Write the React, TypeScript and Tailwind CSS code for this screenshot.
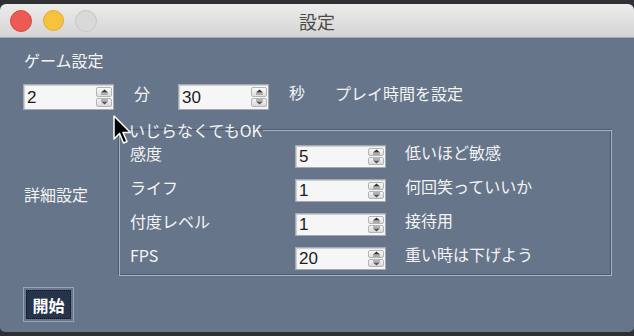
import React from "react";

const jp = { fontFamily: '"Noto Sans CJK JP", "Noto Sans", sans-serif' };

const Spinner: React.FC = () => (
  <div className="flex flex-col w-[16px] h-full py-[2px] gap-px">
    <div className="flex-1 flex items-center justify-center bg-gradient-to-b from-[#fbfbfb] to-[#dedede] border border-[#b5b5b5] rounded-[2px]">
      <svg width="9" height="6" viewBox="0 0 9 6">
        <path d="M4.5 0.5 L8 3.5 H1 Z" fill="#333" />
        <path d="M1 5 H8" stroke="#777" strokeWidth="1" />
      </svg>
    </div>
    <div className="flex-1 flex items-center justify-center bg-gradient-to-b from-[#f4f4f4] to-[#d8d8d8] border border-[#b5b5b5] rounded-[2px]">
      <svg width="9" height="6" viewBox="0 0 9 6">
        <path d="M1 1 H8" stroke="#777" strokeWidth="1" />
        <path d="M4.5 5.5 L8 2.5 H1 Z" fill="#555" />
      </svg>
    </div>
  </div>
);

const SpinBox: React.FC<{ value: string; tall?: boolean }> = ({ value, tall }) => (
  <div
    className={
      "flex items-stretch w-[91px] bg-[#f6f6f6] border border-[#a3a9b2] shadow-[inset_1px_1px_0_#d0d0d0] pr-px " +
      (tall ? "h-[26px]" : "h-[23px]")
    }
  >
    <span
      className="flex-1 pl-[3px] flex items-center text-[17px] text-[#1c1c1c] leading-none"
      style={{ fontFamily: '"Liberation Sans", Arial, sans-serif' }}
    >
      {value}
    </span>
    <Spinner />
  </div>
);

const rows = [
  { label: "感度", value: "5", note: "低いほど敏感" },
  { label: "ライフ", value: "1", note: "何回笑っていいか" },
  { label: "付度レベル", value: "1", note: "接待用" },
  { label: "FPS", value: "20", note: "重い時は下げよう" },
];

const App: React.FC = () => {
  return (
    <div className="w-[634px] h-[336px] bg-[#2e3033] pt-1 overflow-hidden relative" style={jp}>
      <div className="rounded-t-[6px] rounded-b-[5px] overflow-hidden">
        {/* title bar */}
        <div className="h-[34px] grid grid-cols-[1fr_auto_1fr] items-center bg-gradient-to-b from-[#ececec] to-[#d4d4d4] border-b border-[#a9a9a9]">
          <div className="flex items-center gap-[11px] pl-[10px]">
            <span className="w-[22px] h-[22px] rounded-full bg-[#ec5a53] border border-[#d9473f]" />
            <span className="w-[21px] h-[21px] rounded-full bg-[#f6c33d] border border-[#e0aa2a]" />
            <span className="w-[22px] h-[22px] rounded-full bg-[#d9d9d9] border border-[#c6c6c6]" />
          </div>
          <span className="text-[18px] text-[#4b4b4b] leading-none">設定</span>
          <div />
        </div>

        {/* body */}
        <div className="h-[294px] bg-[#667589] text-[#f3f4f6] text-[16px] leading-[20px] pl-[23px] pt-[12px]">
          <div className="pl-px">ゲーム設定</div>

          <div className="flex items-center mt-[14px]">
            <SpinBox value="2" tall />
            <span className="ml-[20px] -mt-[8px]">分</span>
            <span className="ml-[28px]">
              <SpinBox value="30" tall />
            </span>
            <span className="ml-[20px] -mt-[10px]">秒</span>
            <span className="ml-[30px] -mt-[8px]">プレイ時間を設定</span>
          </div>

          <div className="flex mt-[10px]">
            <div className="w-[96px] pl-px pt-[64px]">詳細設定</div>
            <fieldset className="w-[493px] border border-[#a9b4c3] shadow-[-1px_-1px_0_#4e5a6c,inset_-1px_-1px_0_#4e5a6c]">
              <legend className="ml-[8px] px-px leading-[20px]">いじらなくてもOK</legend>
              <div className="grid grid-cols-[165px_91px_1fr] pl-[10px] -mt-px">
                {rows.map((r) => (
                  <React.Fragment key={r.label}>
                    <div className="h-[34px] flex items-center -mt-[3px]">{r.label}</div>
                    <div className="h-[34px] flex items-center">
                      <SpinBox value={r.value} />
                    </div>
                    <div className="h-[34px] flex items-center pl-[19px] -mt-[4px]">{r.note}</div>
                  </React.Fragment>
                ))}
              </div>
            </fieldset>
          </div>

          <div className="mt-[11px] w-[51px] h-[35px] border border-[#98a4b5] p-[2px]">
            <div className="w-full h-full bg-[#27324b] border border-dotted border-[#0d0f14] flex items-center justify-center text-white font-bold text-[16px]">
              開始
            </div>
          </div>
        </div>
      </div>

      {/* mouse pointer */}
      <svg className="absolute left-[113px] top-[115px]" width="22" height="32" viewBox="0 0 22 32">
        <path
          d="M1 1 L1 24 L6.5 18.5 L10.5 28 L14 26.5 L10 17.5 L17.5 17.5 Z"
          fill="#000"
          stroke="#fff"
          strokeWidth="1.5"
          strokeLinejoin="round"
        />
      </svg>
    </div>
  );
};

export default App;
